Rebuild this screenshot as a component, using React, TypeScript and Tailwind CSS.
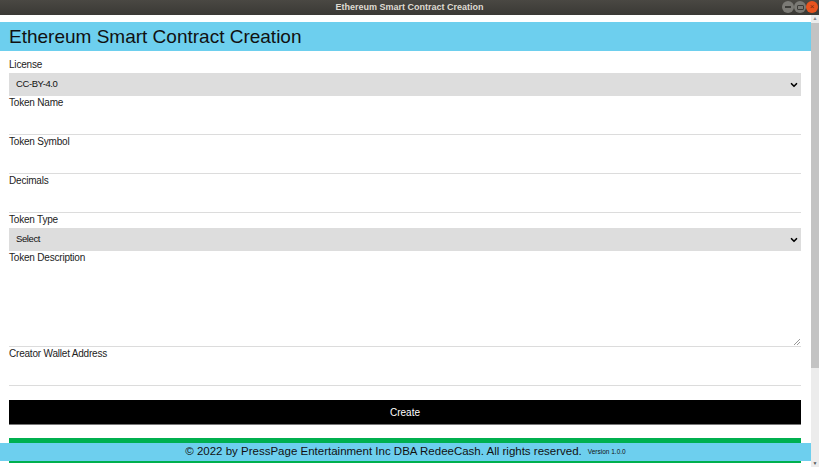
import { ChevronDown } from "lucide-react";

const labelCls = "block h-[13px] text-[10px] leading-[13px] tracking-[-0.2px] text-[#222]";

function Field({ label, children }: { label: string; children: React.ReactNode }) {
  return (
    <div>
      <label className={labelCls}>{label}</label>
      {children}
    </div>
  );
}

function SelectBox({ value }: { value: string }) {
  return (
    <div className="mt-[2px] flex h-[23px] items-center justify-between bg-[#dddddd] pl-[7px] pr-[2px] text-[9.5px] tracking-[-0.4px] text-[#111]">
      <span>{value}</span>
      <ChevronDown className="h-[10px] w-[10px] text-black" strokeWidth={4} />
    </div>
  );
}

function TextLine() {
  return <div className="h-[26px] border-b border-[#dcdcdc]" />;
}

export default function App() {
  return (
    <div className="flex h-[467px] w-[819px] flex-col overflow-hidden bg-white font-['Liberation_Sans',Arial,sans-serif]">
      {/* window title bar */}
      <div className="relative flex h-[15px] items-center justify-center bg-gradient-to-b from-[#4a4843] to-[#3a3935]">
        <span className="text-[9px] font-bold text-[#dfdbd2]">Ethereum Smart Contract Creation</span>
        <div className="absolute right-[1px] top-[1px] flex gap-[0px]">
          <span className="flex h-[12px] w-[12px] items-center justify-center rounded-full bg-[#7b7a75]">
            <span className="h-[2px] w-[6px] bg-[#3d3c38]" />
          </span>
          <span className="flex h-[12px] w-[12px] items-center justify-center rounded-full bg-[#7b7a75]">
            <span className="h-[5px] w-[7px] rounded-[1px] border border-[#3d3c38]" />
          </span>
          <span className="flex h-[12px] w-[12px] items-center justify-center rounded-full bg-[#e9541f] text-[8px] leading-none text-[#7a2a0c]">
            ×
          </span>
        </div>
      </div>

      <div className="flex min-h-0 flex-1">
        <div className="relative w-[811px]">
          <div className="pt-[7px]">
            <h1 className="flex h-[29px] items-center bg-[#6dcfee] pl-[9px] text-[19px] leading-none text-[#111]">
              Ethereum Smart Contract Creation
            </h1>
          </div>

          <div className="pl-[9px] pr-[10px] pt-[7px]">
            <Field label="License">
              <SelectBox value="CC-BY-4.0" />
            </Field>
            <Field label="Token Name">
              <TextLine />
            </Field>
            <Field label="Token Symbol">
              <TextLine />
            </Field>
            <Field label="Decimals">
              <TextLine />
            </Field>
            <Field label="Token Type">
              <SelectBox value="Select" />
            </Field>
            <Field label="Token Description">
              <div className="relative h-[83px] border-b border-[#dcdcdc]">
                <svg className="absolute bottom-[1px] right-[1px]" width="6" height="6" viewBox="0 0 6 6">
                  <path d="M6 0 L0 6 M6 3 L3 6" stroke="#999" strokeWidth="1" />
                </svg>
              </div>
            </Field>
            <Field label="Creator Wallet Address">
              <TextLine />
            </Field>

            <button className="mt-[14px] flex h-[25px] w-full items-center justify-center border-b border-[#777] bg-black text-[10px] text-white">
              Create
            </button>

            <div className="mt-[13px] h-[25px] bg-[#00b04f]" />
          </div>

          <div className="absolute bottom-[6px] left-0 flex h-[18px] w-[811px] items-center justify-center bg-[#6dcfee] text-[11.5px] text-[#111]">
            <span>© 2022 by PressPage Entertainment Inc DBA RedeeCash. All rights reserved.</span>
            <span className="ml-[6px] text-[6.5px]">Version 1.0.0</span>
          </div>
        </div>

        {/* scrollbar */}
        <div className="flex w-[8px] flex-col bg-[#ececec]">
          <div className="flex h-[8px] items-center justify-center text-[5px] text-[#888]">▲</div>
          <div className="h-[345px] bg-[#c3c3c3]" />
          <div className="flex-1" />
          <div className="flex h-[7px] items-center justify-center text-[5px] text-[#555]">▼</div>
        </div>
      </div>
    </div>
  );
}
